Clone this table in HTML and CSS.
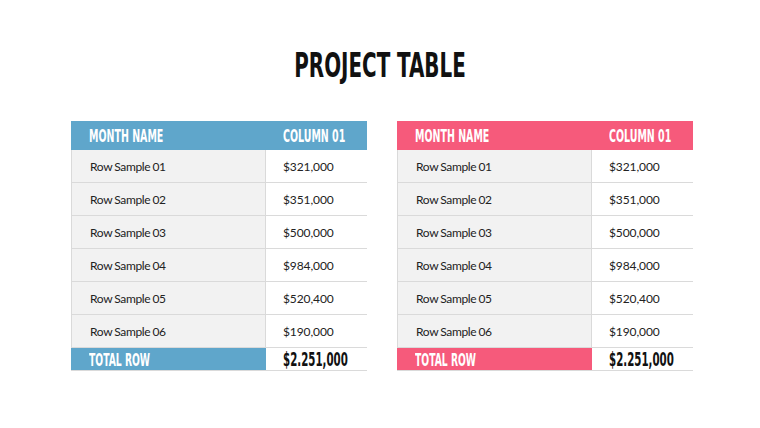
FILE: index.html
```html
<!DOCTYPE html>
<html>
<head>
<meta charset="utf-8">
<link rel="stylesheet" href="styles.css">
</head>
<body>
<div class="page">
  <h1 class="title"><span class="squeeze">PROJECT TABLE</span></h1>
  <div class="tables">
    <div class="table blue">
      <div class="cell head"><span class="hd">MONTH NAME</span></div>
      <div class="cell head"><span class="hd">COLUMN 01</span></div>
      <div class="cell name">Row Sample 01</div><div class="cell val">$321,000</div>
      <div class="cell name">Row Sample 02</div><div class="cell val">$351,000</div>
      <div class="cell name">Row Sample 03</div><div class="cell val">$500,000</div>
      <div class="cell name">Row Sample 04</div><div class="cell val">$984,000</div>
      <div class="cell name">Row Sample 05</div><div class="cell val">$520,400</div>
      <div class="cell name">Row Sample 06</div><div class="cell val">$190,000</div>
      <div class="cell total"><span class="tl">TOTAL ROW</span></div>
      <div class="cell totalval"><span class="tv">$2.251,000</span></div>
    </div>
    <div class="table pink">
      <div class="cell head"><span class="hd">MONTH NAME</span></div>
      <div class="cell head"><span class="hd">COLUMN 01</span></div>
      <div class="cell name">Row Sample 01</div><div class="cell val">$321,000</div>
      <div class="cell name">Row Sample 02</div><div class="cell val">$351,000</div>
      <div class="cell name">Row Sample 03</div><div class="cell val">$500,000</div>
      <div class="cell name">Row Sample 04</div><div class="cell val">$984,000</div>
      <div class="cell name">Row Sample 05</div><div class="cell val">$520,400</div>
      <div class="cell name">Row Sample 06</div><div class="cell val">$190,000</div>
      <div class="cell total"><span class="tl">TOTAL ROW</span></div>
      <div class="cell totalval"><span class="tv">$2.251,000</span></div>
    </div>
  </div>
</div>
</body>
</html>
```
FILE: styles.css
```css
html, body {
  margin: 0;
  padding: 0;
  background: #ffffff;
}
.page {
  width: 760px;
  height: 428px;
  display: flex;
  flex-direction: column;
  align-items: center;
}
.title {
  margin: 46px 0 0 0;
  height: 40px;
  line-height: 40px;
  font-family: "DejaVu Sans Condensed", sans-serif;
  font-weight: 700;
  font-size: 33px;
  color: #111111;
  text-align: center;
  white-space: nowrap;
}
.squeeze {
  display: inline-block;
  transform: scaleX(0.67);
  transform-origin: center;
}
.tables {
  margin-top: 35px;
  display: flex;
  gap: 30px;
  padding-left: 4px;
}
.table {
  display: grid;
  grid-template-columns: 195px 101px;
  grid-template-rows: 29px repeat(6, 33px) 22px;
  border-right: 1px solid #dadada;
  border-bottom: 1px solid #dadada;
  width: 296px;
  box-sizing: border-box;
}
.cell {
  display: flex;
  align-items: center;
  box-sizing: border-box;
  font-family: Lato, "Liberation Sans", sans-serif;
  font-size: 12px;
  color: #222222;
  white-space: nowrap;
}
.name {
  background: #f2f2f2;
  padding-left: 18px;
  letter-spacing: -0.35px;
  word-spacing: -0.5px;
  border-left: 1px solid #dadada;
  border-right: 1px solid #dadada;
  border-bottom: 1px solid #dadada;
}
.val {
  background: #ffffff;
  padding-left: 17px;
  letter-spacing: -0.1px;
  border-bottom: 1px solid #dadada;
}
.head {
  color: #ffffff;
  font-family: "DejaVu Sans Condensed", sans-serif;
  font-weight: 700;
  font-size: 17px;
  padding-left: 18px;
}
.head + .head {
  padding-left: 17px;
}
.hd, .tl, .tv {
  display: inline-block;
  transform-origin: left center;
}
.hd {
  transform: scaleX(0.62);
}
.total {
  color: #ffffff;
  font-family: "DejaVu Sans Condensed", sans-serif;
  font-weight: 700;
  font-size: 18px;
  padding-left: 18px;
}
.tl {
  transform: scaleX(0.57);
}
.totalval {
  background: #ffffff;
  font-family: "DejaVu Sans Condensed", sans-serif;
  font-weight: 700;
  font-size: 19px;
  color: #111111;
  padding-left: 17px;
}
.tv {
  transform: scaleX(0.6);
}
.blue .head, .blue .total {
  background: #5fa6cb;
}
.pink .head, .pink .total {
  background: #f65a7b;
}
```
